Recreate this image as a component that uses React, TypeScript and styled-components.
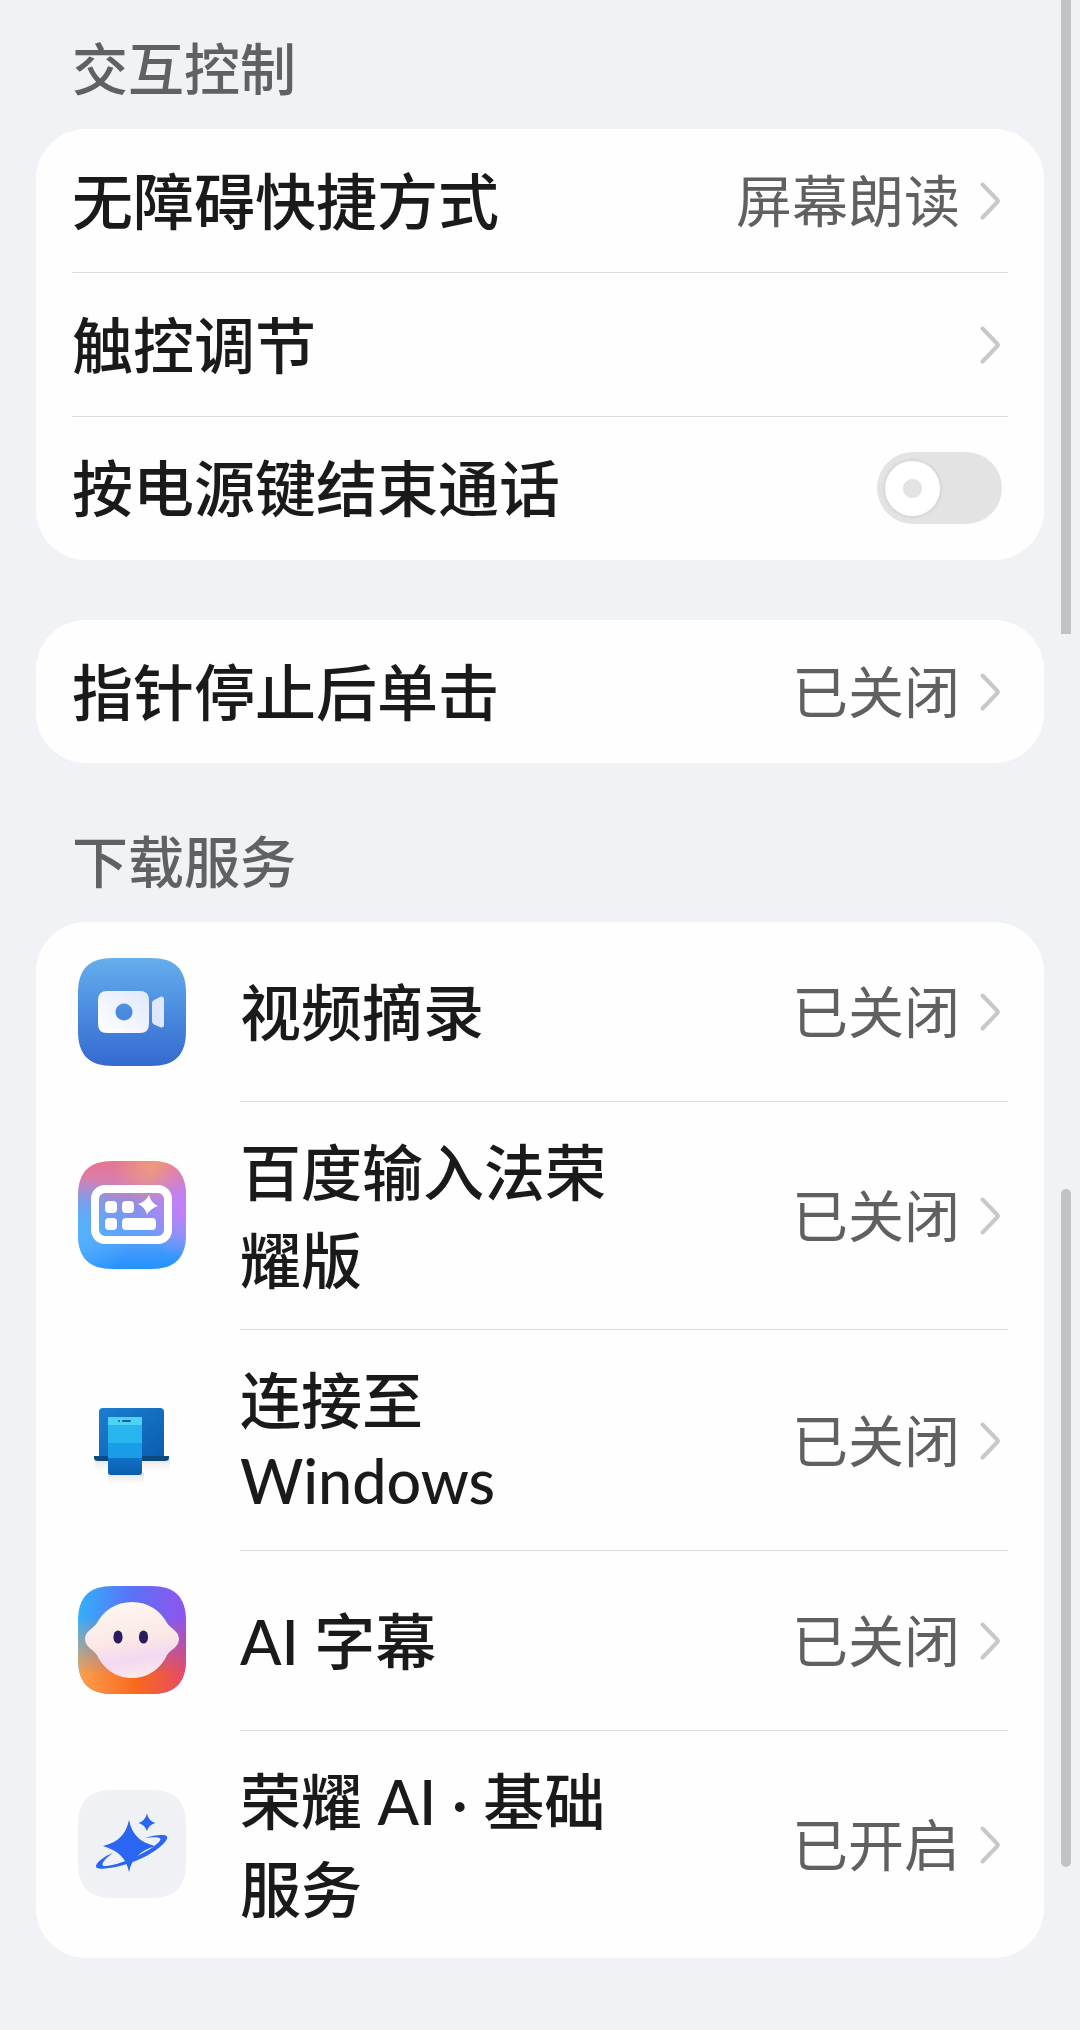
import React, { useState } from "react";
import styled, { createGlobalStyle } from "styled-components";

const GlobalStyle = createGlobalStyle`
  * {
    box-sizing: border-box;
  }

  body {
    margin: 0;
    background: #f0f2f6;
    color: #1a1a1a;
    font-family: Lato, "Noto Sans CJK SC", sans-serif;
  }
`;

const Page = styled.main`
  position: relative;
  padding: 25px 36px 72px;
`;

const SectionTitle = styled.h2`
  margin: 0;
  padding: 0 36px;
  color: #606164;
  font-size: 56px;
  font-weight: 500;
  line-height: 88px;
`;

const Section = styled.section`
  display: flex;
  flex-direction: column;
  gap: 16px;

  & + & {
    margin-top: 55px;
  }
`;

const Cards = styled.div`
  display: flex;
  flex-direction: column;
  gap: 60px;
`;

const Card = styled.ul`
  margin: 0;
  padding: 0 36px;
  list-style: none;
  background: #fefefe;
  border-radius: 50px;
`;

const Item = styled.li`
  display: flex;
  align-items: center;
  gap: 48px;
`;

const rowBase = `
  box-sizing: content-box;
  flex: 1;
  display: flex;
  align-items: center;
  justify-content: space-between;
  color: inherit;
  text-decoration: none;

  li + li > & {
    border-top: 1px solid #dcdcdd;
  }
`;

const RowLink = styled.a<{ $tall?: boolean }>`
  ${rowBase}
  min-height: ${(p) => (p.$tall ? 130 : 94)}px;
  padding: 25px 8px 24px 0;
`;

const RowLabel = styled.label`
  ${rowBase}
  min-height: 94px;
  padding: 24px 6px 25px 0;
`;

const Name = styled.span<{ $latin?: boolean }>`
  padding: ${(p) => (p.$latin ? "6px 0 5px" : "2px 0 0")};
  font-size: 61px;
  font-weight: 500;
  line-height: ${(p) => (p.$latin ? 80 : 88)}px;
`;

const AppName = styled(Name)`
  max-width: 400px;
`;

const Value = styled.span`
  display: flex;
  align-items: center;
  gap: 20px;
  color: #606060;
  font-size: 56px;
  line-height: 88px;
  white-space: nowrap;
`;

const AppIcon = styled.svg`
  flex: none;
  width: 120px;
  height: 120px;
`;

const ChevronIcon = styled.svg`
  flex: none;
  width: 20px;
  height: 38px;
`;

const Switch = styled.input`
  appearance: none;
  display: flex;
  align-items: center;
  width: 125px;
  height: 72px;
  margin: 0;
  padding: 8px;
  border-radius: 36px;
  background: #e3e3e3;

  &::before {
    content: "";
    width: 55px;
    height: 55px;
    border-radius: 50%;
    background: radial-gradient(circle, #e3e3e3 0 9px, #fff 10px);
    box-shadow: 0 0 4px rgba(0, 0, 0, 0.14);
  }

  &:checked {
    justify-content: flex-end;
    background: #256fff;
  }
`;

const ScrollThumb = styled.div<{ $top: number; $height: number; $rounded?: boolean }>`
  position: absolute;
  top: ${(p) => p.$top}px;
  right: 9px;
  width: 10px;
  height: ${(p) => p.$height}px;
  border-radius: ${(p) => (p.$rounded ? 5 : 0)}px;
  background: #c1c2c4;
`;

function Chevron() {
  return (
    <ChevronIcon viewBox="0 0 20 38" fill="none" aria-hidden="true">
      <path
        d="M2.5 2.5 L17 17.500 Q18.500 19 17 20.500 L2.5 35.5"
        stroke="#c8c8c8"
        strokeWidth="4"
        strokeLinecap="round"
      />
    </ChevronIcon>
  );
}

// rounded tile shared by the app icons, 108 units wide
const tile =
  "M39 4 H77 C101 4 112 15 112 39 V77 C112 101 101 112 77 112 H39 C15 112 4 101 4 77 V39 C4 15 15 4 39 4 Z";

const iconBox = "-2 -2 120 120";

function VideoIcon() {
  return (
    <AppIcon viewBox={iconBox} aria-hidden="true">
      <defs>
        <linearGradient id="videoBg" x1="0" y1="0" x2="0" y2="1">
          <stop offset="0" stopColor="#66aeec" />
          <stop offset="0.5" stopColor="#4a8be0" />
          <stop offset="1" stopColor="#3669cf" />
        </linearGradient>
        <linearGradient id="videoFg" x1="0" y1="1" x2="1" y2="0">
          <stop offset="0" stopColor="#ffffff" />
          <stop offset="1" stopColor="#dfe9fb" />
        </linearGradient>
      </defs>
      <path d={tile} fill="url(#videoBg)" />
      <path
        d="M33 37 H66 Q75 37 75 46 V70 Q75 79 66 79 H33 Q24 79 24 70 V46 Q24 37 33 37 Z M50 49.500 a8.500 8.500 0 1 0 0.010 0 Z"
        fill="url(#videoFg)"
        fillRule="evenodd"
      />
      <path d="M78 49 Q78 47 80 46 L87 42.500 Q90 42 90 45 V71 Q90 74 87 73.500 L80 70.500 Q78 69.500 78 67 Z" fill="#dfe8fb" />
    </AppIcon>
  );
}

function KeyboardIcon() {
  return (
    <AppIcon viewBox={iconBox} aria-hidden="true">
      <defs>
        <linearGradient id="kbBg" x1="0" y1="0" x2="0" y2="1">
          <stop offset="0" stopColor="#e8738f" />
          <stop offset="0.18" stopColor="#d77fae" />
          <stop offset="0.42" stopColor="#8f8fe6" />
          <stop offset="0.7" stopColor="#5aa2fb" />
          <stop offset="1" stopColor="#2191fd" />
        </linearGradient>
        <radialGradient id="kbOrange" cx="0.68" cy="0.05" r="0.35">
          <stop offset="0" stopColor="#ee9a80" />
          <stop offset="1" stopColor="#ee9a80" stopOpacity="0" />
        </radialGradient>
        <radialGradient id="kbViolet" cx="1" cy="0.45" r="0.45">
          <stop offset="0" stopColor="#c97dfb" />
          <stop offset="1" stopColor="#c97dfb" stopOpacity="0" />
        </radialGradient>
        <radialGradient id="kbBlue" cx="0" cy="0.65" r="0.5">
          <stop offset="0" stopColor="#55b3ff" />
          <stop offset="1" stopColor="#55b3ff" stopOpacity="0" />
        </radialGradient>
      </defs>
      <path d={tile} fill="url(#kbBg)" />
      <path d={tile} fill="url(#kbOrange)" />
      <path d={tile} fill="url(#kbViolet)" />
      <path d={tile} fill="url(#kbBlue)" />
      <rect x="21" y="32" width="73" height="51" rx="10" fill="none" stroke="#fff" strokeWidth="8" />
      <g fill="#fff">
        <rect x="31" y="44" width="12" height="12" rx="4" />
        <rect x="48" y="44" width="12" height="12" rx="4" />
        <rect x="31" y="61" width="12" height="12" rx="4" />
        <rect x="48" y="61" width="34" height="12" rx="4" />
        <path d="M75 38 Q77 46 84 49 Q77 51 73 57.500 Q71 50 64 47 Q72 44.500 75 38 Z" />
      </g>
    </AppIcon>
  );
}

function WindowsLinkIcon() {
  return (
    <AppIcon viewBox={iconBox} aria-hidden="true">
      <defs>
        <linearGradient id="laptop" x1="0" y1="0" x2="1" y2="1">
          <stop offset="0" stopColor="#1a7fd0" />
          <stop offset="1" stopColor="#0b5cb2" />
        </linearGradient>
        <linearGradient id="phoneLow" x1="0" y1="0" x2="0" y2="1">
          <stop offset="0" stopColor="#0f76cd" />
          <stop offset="1" stopColor="#0a5cae" />
        </linearGradient>
        <linearGradient id="linkShadow" x1="0" y1="0" x2="0" y2="1">
          <stop offset="0" stopColor="#dccfd2" stopOpacity="0.8" />
          <stop offset="1" stopColor="#f4eeee" stopOpacity="0" />
        </linearGradient>
      </defs>
      <rect x="21" y="76" width="75" height="14" rx="3" fill="url(#linkShadow)" />
      <rect x="34" y="90" width="36" height="14" rx="3" fill="url(#linkShadow)" />
      <path d="M29 26 H86 Q90 26 90 30 V75 H25 V30 Q25 26 29 26 Z" fill="url(#laptop)" />
      <path d="M20 74 H95 V76 Q95 79 91 79 H24 Q20 79 20 76 Z" fill="#0e4a80" />
      <path d="M34 73 H68 V90 Q68 93 65 93 H37 Q34 93 34 90 Z" fill="url(#phoneLow)" />
      <rect x="34" y="59" width="34" height="17" fill="#1a9de8" />
      <rect x="34" y="35" width="34" height="26" fill="#28b4ee" />
      <rect x="34" y="35" width="34" height="8" fill="#4ed3f6" />
      <circle cx="45" cy="39" r="1" fill="#12608f" />
      <rect x="48" y="38" width="9" height="2" rx="1" fill="#12608f" />
    </AppIcon>
  );
}

function CaptionsIcon() {
  return (
    <AppIcon viewBox={iconBox} aria-hidden="true">
      <defs>
        <linearGradient id="capBg" x1="0" y1="0" x2="1" y2="0">
          <stop offset="0" stopColor="#34b0fb" />
          <stop offset="0.5" stopColor="#5a72f6" />
          <stop offset="1" stopColor="#9154ec" />
        </linearGradient>
        <linearGradient id="capWarm" x1="0" y1="0" x2="1" y2="0">
          <stop offset="0" stopColor="#fda04f" />
          <stop offset="0.55" stopColor="#f8681e" />
          <stop offset="1" stopColor="#e64a66" />
        </linearGradient>
        <linearGradient id="capFade" x1="0" y1="0" x2="0" y2="1">
          <stop offset="0.3" stopColor="#000" />
          <stop offset="0.8" stopColor="#fff" />
        </linearGradient>
        <mask id="capMask">
          <rect width="116" height="116" fill="url(#capFade)" />
        </mask>
        <linearGradient id="capFace" x1="0.4" y1="0" x2="0.6" y2="1">
          <stop offset="0" stopColor="#fdf7f1" />
          <stop offset="0.5" stopColor="#fbe8e6" />
          <stop offset="0.75" stopColor="#f3d8f2" />
          <stop offset="1" stopColor="#fbeae8" />
        </linearGradient>
      </defs>
      <path d={tile} fill="url(#capBg)" />
      <path d={tile} fill="url(#capWarm)" mask="url(#capMask)" />
      <path
        d="M58 20 C74 20 87 29 93 41 C96 46 105 49 105 57 C105 65 96 68 93 73 C87 86 75 96 58 96 C41 96 29 86 23 73 C20 68 11 65 11 57 C11 49 20 46 23 41 C29 29 42 20 58 20 Z"
        fill="url(#capFace)"
      />
      <g fill="#2c1c5c">
        <ellipse cx="44" cy="55" rx="4.600" ry="6.600" />
        <ellipse cx="69.500" cy="55" rx="4.600" ry="6.600" />
      </g>
    </AppIcon>
  );
}

function HonorAiIcon() {
  return (
    <AppIcon viewBox={iconBox} aria-hidden="true">
      <path d={tile} fill="#eff1f5" />
      <g fill="#2a66f2">
        <path d="M55 34 C58 48 65 56 81 60 C66 65 58 72 55 86 C52 72 45 65 29 60 C45 56 52 48 55 34 Z" />
        <path d="M73 27.500 Q74.500 35 81.500 37 Q74.500 39 73 45 Q71 39 64.500 37 Q71 35 73 27.500 Z" />
        <path d="M39 67 C28 71 20 79 22.500 81.500 C26 85 48 81 66 73 C84 65 95 54 93 50.500 C91 48 80 49 71 52 C80 50.500 86 51 86.500 53 C86 57 76 64 62 70.500 C46 78 30 82 28.500 79 C28 76 33 71 39 67 Z" />
      </g>
    </AppIcon>
  );
}

const shortcuts = [
  { name: "无障碍快捷方式", value: "屏幕朗读" },
  { name: "触控调节", value: "" },
];

const services = [
  { name: "视频摘录", value: "已关闭", Icon: VideoIcon },
  { name: "百度输入法荣耀版", value: "已关闭", Icon: KeyboardIcon },
  { name: "连接至 Windows", value: "已关闭", Icon: WindowsLinkIcon, latin: true },
  { name: "AI 字幕", value: "已关闭", Icon: CaptionsIcon },
  { name: "荣耀 AI · 基础服务", value: "已开启", Icon: HonorAiIcon },
];

function App() {
  const [powerEndsCall, setPowerEndsCall] = useState(false);

  return (
    <React.Fragment>
      <GlobalStyle />
      <Page>
        <Section>
          <SectionTitle>交互控制</SectionTitle>
          <Cards>
            <Card>
              {shortcuts.map((item) => (
                <Item key={item.name}>
                  <RowLink href="#">
                    <Name>{item.name}</Name>
                    <Value>
                      {item.value}
                      <Chevron />
                    </Value>
                  </RowLink>
                </Item>
              ))}
              <Item>
                <RowLabel>
                  <Name>按电源键结束通话</Name>
                  <Switch
                    type="checkbox"
                    role="switch"
                    checked={powerEndsCall}
                    onChange={(e) => setPowerEndsCall(e.target.checked)}
                  />
                </RowLabel>
              </Item>
            </Card>
            <Card>
              <Item>
                <RowLink href="#">
                  <Name>指针停止后单击</Name>
                  <Value>
                    已关闭
                    <Chevron />
                  </Value>
                </RowLink>
              </Item>
            </Card>
          </Cards>
        </Section>

        <Section>
          <SectionTitle>下载服务</SectionTitle>
          <Card>
            {services.map(({ name, value, Icon, latin }) => (
              <Item key={name}>
                <Icon />
                <RowLink href="#" $tall>
                  <AppName $latin={latin}>{name}</AppName>
                  <Value>
                    {value}
                    <Chevron />
                  </Value>
                </RowLink>
              </Item>
            ))}
          </Card>
        </Section>

        <ScrollThumb $top={0} $height={634} />
        <ScrollThumb $top={1189} $height={678} $rounded />
      </Page>
    </React.Fragment>
  );
}

export default App;
